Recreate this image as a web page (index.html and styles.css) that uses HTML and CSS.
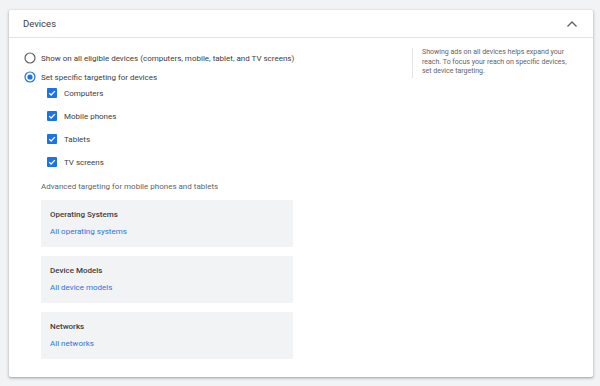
FILE: index.html
```html
<!DOCTYPE html>
<html>
<head>
<meta charset="utf-8">
<link rel="stylesheet" href="styles.css">
</head>
<body>
<div class="card">
  <div class="card-header">
    <span class="title">Devices</span>
    <svg class="chevron" width="12" height="8" viewBox="0 0 12 8"><path d="M1.5 6.5 L6 2 L10.5 6.5" fill="none" stroke="#5f6368" stroke-width="1.4"/></svg>
  </div>
  <div class="card-body">
    <div class="main">
      <div class="radio-row">
        <svg class="radio" width="12" height="12" viewBox="0 0 12 12"><circle cx="6" cy="6" r="5" fill="none" stroke="#5f6368" stroke-width="1.2"/></svg>
        <span>Show on all eligible devices (computers, mobile, tablet, and TV screens)</span>
      </div>
      <div class="radio-row">
        <svg class="radio" width="12" height="12" viewBox="0 0 12 12"><circle cx="6" cy="6" r="5" fill="none" stroke="#1a73e8" stroke-width="1.2"/><circle cx="6" cy="6" r="2.6" fill="#1a73e8"/></svg>
        <span>Set specific targeting for devices</span>
      </div>
      <div class="checks">
        <div class="check-row"><svg class="check" width="10" height="10" viewBox="0 0 10 10"><rect width="10" height="10" rx="1" fill="#1a73e8"/><path d="M2.2 5.1 L4.1 7 L7.9 3.1" fill="none" stroke="#fff" stroke-width="1.3"/></svg><span>Computers</span></div>
        <div class="check-row"><svg class="check" width="10" height="10" viewBox="0 0 10 10"><rect width="10" height="10" rx="1" fill="#1a73e8"/><path d="M2.2 5.1 L4.1 7 L7.9 3.1" fill="none" stroke="#fff" stroke-width="1.3"/></svg><span>Mobile phones</span></div>
        <div class="check-row"><svg class="check" width="10" height="10" viewBox="0 0 10 10"><rect width="10" height="10" rx="1" fill="#1a73e8"/><path d="M2.2 5.1 L4.1 7 L7.9 3.1" fill="none" stroke="#fff" stroke-width="1.3"/></svg><span>Tablets</span></div>
        <div class="check-row"><svg class="check" width="10" height="10" viewBox="0 0 10 10"><rect width="10" height="10" rx="1" fill="#1a73e8"/><path d="M2.2 5.1 L4.1 7 L7.9 3.1" fill="none" stroke="#fff" stroke-width="1.3"/></svg><span>TV screens</span></div>
      </div>
      <div class="advanced">Advanced targeting for mobile phones and tablets</div>
      <div class="boxes">
        <div class="box"><div class="box-title">Operating Systems</div><div class="box-link">All operating systems</div></div>
        <div class="box"><div class="box-title">Device Models</div><div class="box-link">All device models</div></div>
        <div class="box"><div class="box-title">Networks</div><div class="box-link">All networks</div></div>
      </div>
    </div>
    <div class="help">Showing ads on all devices helps expand your reach. To focus your reach on specific devices, set device targeting.</div>
  </div>
</div>
</body>
</html>
```
FILE: styles.css
```css
html, body {
  margin: 0;
  padding: 0;
}
body {
  background: #f1f3f4;
  font-family: Roboto, "Liberation Sans", Arial, sans-serif;
  color: #3c4043;
  width: 600px;
  height: 386px;
  overflow: hidden;
}
.card {
  margin: 10px 7px 0 9px;
  width: 584px;
  height: 367px;
  background: #fff;
  border-radius: 2px;
  box-shadow: 0 1px 2px rgba(60,64,67,.3), 0 1px 3px 1px rgba(60,64,67,.15);
  box-sizing: border-box;
}
.card-header {
  height: 28px;
  border-bottom: 1px solid #e3e4e6;
  box-sizing: border-box;
  display: flex;
  align-items: center;
  padding: 0 15px 0 14px;
}
.title {
  font-size: 9.5px;
  color: #3c4043;
  flex: 1;
}
.chevron {
  display: block;
}
.card-body {
  display: flex;
  padding: 13px 0 0 15px;
}
.main {
  width: 270px;
  font-size: 8px;
  color: #3c4043;
}
.radio-row {
  display: flex;
  align-items: center;
  height: 14px;
  margin-bottom: 5px;
  white-space: nowrap;
}
.radio {
  display: block;
  margin-right: 5px;
  flex: none;
}
.checks {
  margin-top: -5px;
  padding-left: 23px;
  display: flex;
  flex-direction: column;
  gap: 5px;
}
.check-row {
  display: flex;
  align-items: center;
  height: 18px;
}
.check {
  display: block;
  margin-right: 7px;
  flex: none;
}
.advanced {
  margin-top: 9px;
  margin-left: 17px;
  height: 14px;
  line-height: 14px;
  color: #5f6368;
}
.boxes {
  margin-top: 6px;
  margin-left: 17px;
  display: flex;
  flex-direction: column;
  gap: 9px;
}
.box {
  width: 252px;
  height: 47px;
  box-sizing: border-box;
  background: #f1f3f4;
  padding: 9px 9px 0;
}
.box-title {
  line-height: 12px;
  font-size: 8px;
  font-weight: 500;
  color: #3c4043;
}
.box-link {
  margin-top: 5px;
  line-height: 12px;
  color: #2f74e0;
}
.help {
  margin-left: 118px;
  margin-top: -3px;
  align-self: flex-start;
  width: 150px;
  border-left: 1px solid #e3e4e6;
  padding: 0 0 1px 9px;
  font-size: 7px;
  line-height: 9.6px;
  color: #5f6368;
}
```
